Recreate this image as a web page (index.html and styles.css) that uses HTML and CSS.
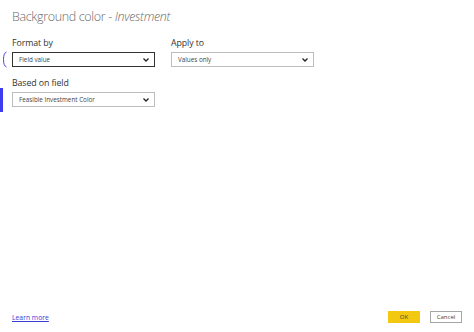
FILE: index.html
```html
<!DOCTYPE html>
<html>
<head>
<meta charset="utf-8">
<link rel="stylesheet" href="styles.css">
</head>
<body>
<div class="dialog">
  <h1 class="title">Background color - <em>Investment</em></h1>
  <div class="row">
    <div class="field">
      <div class="label">Format by</div>
      <div class="select focused"><span>Field value</span><svg class="chev" viewBox="0 0 6 4" width="6" height="4"><path d="M0.5 0.5 L3 3 L5.5 0.5" fill="none" stroke="#222" stroke-width="1.3"/></svg></div>
    </div>
    <div class="field">
      <div class="label">Apply to</div>
      <div class="select"><span>Values only</span><svg class="chev" viewBox="0 0 6 4" width="6" height="4"><path d="M0.5 0.5 L3 3 L5.5 0.5" fill="none" stroke="#222" stroke-width="1.3"/></svg></div>
    </div>
  </div>
  <div class="row">
    <div class="field">
      <div class="label">Based on field</div>
      <div class="select"><span>Feasible Investment Color</span><svg class="chev" viewBox="0 0 6 4" width="6" height="4"><path d="M0.5 0.5 L3 3 L5.5 0.5" fill="none" stroke="#222" stroke-width="1.3"/></svg></div>
    </div>
  </div>
  <div class="spacer"></div>
  <div class="footer">
    <a class="learn" href="#">Learn more</a>
    <div class="buttons">
      <button class="btn ok">OK</button>
      <button class="btn cancel">Cancel</button>
    </div>
  </div>
  <svg class="mark mark1" width="6" height="17" viewBox="0 0 6 17"><path d="M5.5 1 Q2.5 2 2.5 8.5 Q2.5 15 5.5 16" fill="none" stroke="#4a44e0" stroke-width="1"/></svg>
  <div class="mark mark2"></div>
</div>
</body>
</html>
```
FILE: styles.css
```css
html, body { margin: 0; padding: 0; background: #fff; }
body { width: 474px; height: 332px; overflow: hidden; font-family: "Open Sans", "Noto Sans", sans-serif; }
.dialog { position: relative; height: 332px; box-sizing: border-box; padding: 8px 12px 9px 12px; display: flex; flex-direction: column; }
.title { margin: 0; font-weight: 300; font-size: 12.5px; line-height: 18px; color: #6b6b6b; letter-spacing: -0.35px; }
.title em { font-style: italic; }
.row { display: flex; gap: 16px; margin-top: 12px; }
.row + .row { margin-top: 11px; }
.field { width: 143px; display: flex; flex-direction: column; }
.label { font-size: 8.8px; line-height: 11px; color: #333; margin-bottom: 3px; letter-spacing: -0.1px; }
.select { height: 15px; box-sizing: border-box; border: 1px solid #bdbdbd; display: flex; align-items: center; justify-content: space-between; padding: 0 5px 0 6px; font-size: 6.3px; color: #444; }
.select.focused { border-color: #333; }
.chev { display: block; }
.spacer { flex: 1; }
.footer { display: flex; align-items: center; justify-content: space-between; }
.learn { font-size: 6.8px; color: #3b3bd8; text-decoration: underline; }
.buttons { display: flex; gap: 10px; margin-right: 0; }
.btn { width: 32px; height: 12px; box-sizing: border-box; font-family: inherit; font-size: 6px; padding: 0; color: #444; }
.ok { background: #f2c811; border: 1px solid #f2c811; }
.cancel { background: #fff; border: 1px solid #a6a6a6; }
.mark { position: absolute; }
.mark1 { left: 1px; top: 51px; }
.mark2 { left: 0; top: 88px; width: 3px; height: 24px; background: #3d3cee; }
```
